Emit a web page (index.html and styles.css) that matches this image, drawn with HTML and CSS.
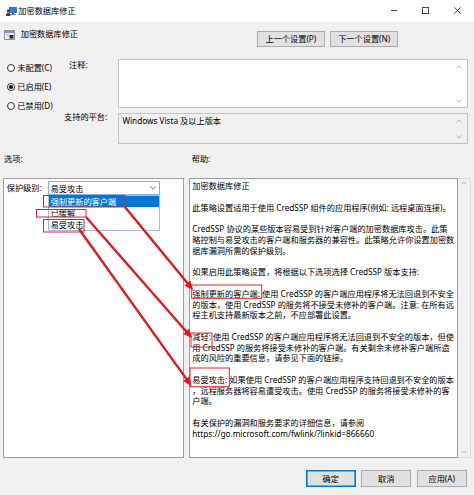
FILE: index.html
```html
<!DOCTYPE html>
<html lang="zh-CN">
<head>
<meta charset="utf-8">
<title>加密数据库修正</title>
<link rel="stylesheet" href="styles.css">
</head>
<body>
<div class="titlebar">
  <svg class="app-icon" viewBox="0 0 11 9" width="11" height="9">
    <rect x="3.3" y="0.4" width="7.3" height="5.4" fill="#2f7fd8" stroke="#1b4f98" stroke-width="0.6"/>
    <rect x="6" y="5.8" width="2" height="1.4" fill="#555"/>
    <rect x="4.6" y="7.2" width="4.8" height="0.9" fill="#555"/>
    <circle cx="2.2" cy="4" r="1.4" fill="#3c3c3c"/>
    <path d="M0 9 Q0 5.8 2.2 5.8 Q4.4 5.8 4.4 9z" fill="#3c3c3c"/>
  </svg>
  <span class="title">加密数据库修正</span>
  <div class="win-controls">
    <span class="wc"><svg width="6" height="1" viewBox="0 0 6 1"><rect width="6" height="0.8" fill="#222"/></svg></span>
    <span class="wc"><svg width="7" height="7" viewBox="0 0 7 7"><rect x="0.4" y="0.4" width="6.2" height="6.2" fill="none" stroke="#222" stroke-width="0.8"/></svg></span>
    <span class="wc"><svg width="7" height="7" viewBox="0 0 7 7"><path d="M0.3 0.3L6.7 6.7M6.7 0.3L0.3 6.7" stroke="#222" stroke-width="0.8"/></svg></span>
  </div>
</div>

<div class="header">
  <svg class="hdr-icon" viewBox="0 0 11 10" width="11" height="10">
    <rect x="0.5" y="0.5" width="10" height="9" fill="#ececec" stroke="#7a7a7a" stroke-width="0.8"/>
    <rect x="1" y="1" width="9" height="2" fill="#7d9cc0"/>
    <rect x="2" y="4.5" width="3" height="0.8" fill="#999"/>
    <rect x="5.5" y="5" width="4" height="3.6" fill="#2e2e2e"/>
  </svg>
  <span class="hdr-title">加密数据库修正</span>
  <div class="nav">
    <button class="btn nav-btn">上一个设置(P)</button>
    <button class="btn nav-btn">下一个设置(N)</button>
  </div>
</div>

<div class="config">
  <div class="radios">
    <div class="radio"><span class="radio-dot"></span><span>未配置(C)</span></div>
    <div class="radio"><span class="radio-dot checked"></span><span>已启用(E)</span></div>
    <div class="radio"><span class="radio-dot"></span><span>已禁用(D)</span></div>
  </div>
  <div class="lbl lbl-comment">注释:</div>
  <div class="box comment">
    <div class="box-body"></div>
    <div class="sb">
      <svg width="6" height="4" viewBox="0 0 6 4"><path d="M0.5 3.5L3 1L5.5 3.5" fill="none" stroke="#a8a8a8" stroke-width="0.8"/></svg>
      <svg width="6" height="4" viewBox="0 0 6 4"><path d="M0.5 0.5L3 3L5.5 0.5" fill="none" stroke="#a8a8a8" stroke-width="0.8"/></svg>
    </div>
  </div>
  <div class="lbl lbl-platform">支持的平台:</div>
  <div class="box platform">
    <div class="box-body">Windows Vista 及以上版本</div>
    <div class="sb">
      <svg width="6" height="4" viewBox="0 0 6 4"><path d="M0.5 3.5L3 1L5.5 3.5" fill="none" stroke="#a8a8a8" stroke-width="0.8"/></svg>
      <svg width="6" height="4" viewBox="0 0 6 4"><path d="M0.5 0.5L3 3L5.5 0.5" fill="none" stroke="#a8a8a8" stroke-width="0.8"/></svg>
    </div>
  </div>
</div>

<div class="lower">
  <div class="sec-label">选项:</div>
  <div class="sec-label help-label">帮助:</div>
  <div class="options-panel">
    <div class="opt-row">
      <span class="opt-label">保护级别:</span>
      <div class="combo">
        <span>易受攻击</span>
        <svg class="combo-arrow" width="6" height="4" viewBox="0 0 6 4"><path d="M0.5 0.5L3 3L5.5 0.5" fill="none" stroke="#555" stroke-width="0.8"/></svg>
        <div class="dropdown">
          <div class="dd-item sel">强制更新的客户端</div>
          <div class="dd-item">已缓解</div>
          <div class="dd-item">易受攻击</div>
        </div>
      </div>
    </div>
  </div>
  <div class="help-panel">
    <div class="help-text">
      <p>加密数据库修正</p>
      <p>此策略设置适用于使用 CredSSP 组件的应用程序(例如: 远程桌面连接)。</p>
      <p>CredSSP 协议的某些版本容易受到针对客户端的加密数据库攻击。此策<br>略控制与易受攻击的客户端和服务器的兼容性。此策略允许你设置加密数<br>据库漏洞所需的保护级别。</p>
      <p>如果启用此策略设置，将根据以下选项选择 CredSSP 版本支持:</p>
      <p>强制更新的客户端: 使用 CredSSP 的客户端应用程序将无法回退到不安全<br>的版本，使用 CredSSP 的服务将不接受未修补的客户端。注意: 在所有远<br>程主机支持最新版本之前，不应部署此设置。</p>
      <p>减轻: 使用 CredSSP 的客户端应用程序将无法回退到不安全的版本，但使<br>用 CredSSP 的服务将接受未修补的客户端。有关剩余未修补客户端所造<br>成的风险的重要信息，请参见下面的链接。</p>
      <p>易受攻击: 如果使用 CredSSP 的客户端应用程序支持回退到不安全的版本<br>，远程服务器将容易遭受攻击。使用 CredSSP 的服务将接受未修补的客<br>户端。</p>
      <p>有关保护的漏洞和服务要求的详细信息，请参阅<br>https://go.microsoft.com/fwlink/?linkid=866660</p>
    </div>
    <div class="help-sb">
      <svg width="6" height="4" viewBox="0 0 6 4"><path d="M0.5 3.5L3 1L5.5 3.5" fill="none" stroke="#a8a8a8" stroke-width="0.8"/></svg>
      <svg width="6" height="4" viewBox="0 0 6 4"><path d="M0.5 0.5L3 3L5.5 0.5" fill="none" stroke="#a8a8a8" stroke-width="0.8"/></svg>
    </div>
  </div>
</div>

<div class="footer">
  <button class="btn fbtn btn-ok">确定</button>
  <button class="btn fbtn">取消</button>
  <button class="btn fbtn">应用(A)</button>
</div>

<svg class="annot" width="474" height="495" viewBox="0 0 474 495">
  <defs>
    <marker id="ah" markerWidth="10" markerHeight="8" refX="2" refY="4" orient="auto" markerUnits="userSpaceOnUse">
      <path d="M0,0 L9,4 L0,8 z" fill="#e5141c"/>
    </marker>
  </defs>
  <g fill="none" stroke="#e2242b" stroke-width="1">
    <rect x="43.5" y="195.5" width="81.5" height="11.5"/>
    <rect x="36.5" y="209.5" width="49.5" height="7.5"/>
    <rect x="43.5" y="219.5" width="40.5" height="12.5"/>
    <rect x="191.7" y="285" width="70" height="13.3"/>
    <rect x="191" y="333" width="21" height="14"/>
    <rect x="190" y="368" width="39.3" height="18.7"/>
  </g>
  <g stroke="#e5141c" stroke-width="2.3" marker-end="url(#ah)">
    <line x1="125" y1="207" x2="188.6" y2="284.6"/>
    <line x1="86" y1="217" x2="187.4" y2="332.7"/>
    <line x1="79" y1="229" x2="187.4" y2="380.3"/>
  </g>
</svg>
</body>
</html>
```
FILE: styles.css
```css
* { box-sizing: border-box; }

body {
  margin: 0;
  width: 474px;
  height: 495px;
  overflow: hidden;
  background: #f0f0f0;
  font-family: "Noto Sans", "Noto Sans CJK SC", sans-serif;
  font-size: 8.2px;
  color: #000;
  position: relative;
}

/* title bar */
.titlebar {
  height: 22px;
  background: #fff;
  display: flex;
  align-items: center;
}
.app-icon { margin-left: 6px; flex: none; }
.title { margin-left: 1.3px; line-height: 12px; }
.win-controls {
  margin-left: auto;
  margin-right: 1px;
  display: flex;
  align-self: stretch;
}
.wc {
  width: 31.5px;
  display: flex;
  align-items: center;
  justify-content: center;
  padding-bottom: 2px;
}

/* header */
.header {
  height: 30px;
  display: flex;
  align-items: flex-start;
}
.hdr-icon { margin-left: 4px; margin-top: 8px; flex: none; }
.hdr-title { margin-left: 5.7px; margin-top: 6.3px; line-height: 12px; }
.nav {
  margin-left: auto;
  margin-right: 75.7px;
  margin-top: 8.7px;
  display: flex;
  gap: 5px;
}
.btn {
  background: #e1e1e1;
  border: 1px solid #adadad;
  font: inherit;
  color: #000;
  padding: 0;
  margin: 0;
  text-align: center;
}
.nav-btn { width: 68.3px; height: 16px; line-height: 14px; }

/* config area */
.config {
  display: grid;
  grid-template-columns: 64px 54px 350px;
  grid-template-rows: 49.3px 31px;
  row-gap: 5px;
  margin-top: 7px;
}
.radios {
  grid-row: 1 / 3;
  grid-column: 1;
  display: flex;
  flex-direction: column;
  gap: 7.2px;
  padding-top: 2.7px;
  padding-left: 6.7px;
}
.radio { display: flex; align-items: center; height: 12px; line-height: 12px; }
.radio-dot {
  width: 8.3px;
  height: 8.3px;
  border: 1px solid #333;
  border-radius: 50%;
  margin-right: 2.3px;
  background: #fff;
  display: flex;
  align-items: center;
  justify-content: center;
  flex: none;
}
.radio-dot.checked::after {
  content: "";
  width: 3.6px;
  height: 3.6px;
  border-radius: 50%;
  background: #1a1a1a;
}
.lbl-comment { grid-column: 2; grid-row: 1; padding-left: 5px; line-height: 12px; }
.lbl-platform { grid-column: 2; grid-row: 2; line-height: 8px; }
.box { border: 1px solid #c4c4c4; display: flex; }
.comment { grid-column: 3; grid-row: 1; background: #fff; }
.platform { grid-column: 3; grid-row: 2; background: #f0f0f0; }
.box-body { flex: 1; padding-left: 3.4px; padding-top: 0.4px; line-height: 12px; }
.sb {
  width: 16px;
  display: flex;
  flex-direction: column;
  justify-content: space-between;
  align-items: center;
  padding: 4.5px 0;
}

/* lower area */
.lower {
  display: grid;
  grid-template-columns: 181px 282px;
  grid-template-rows: 33.7px 280px;
  column-gap: 5px;
  padding-left: 3px;
}
.sec-label { padding-top: 8.7px; padding-left: 1px; line-height: 12px; }
.help-label { padding-left: 2.7px; }

.options-panel {
  background: #fff;
  border: 1px solid #a0a0a0;
  padding: 2px 0 0 2.7px;
}
.opt-row { display: flex; align-items: center; }
.opt-label { width: 41.6px; flex: none; line-height: 12px; padding-top: 1px; }
.combo {
  position: relative;
  width: 111.7px;
  height: 14px;
  border: 1px solid #85b2e2;
  background: #fff;
  display: flex;
  align-items: center;
  padding-left: 1.4px;
}
.combo-arrow { margin-left: auto; margin-right: 3px; }
.dropdown {
  position: absolute;
  top: 13px;
  left: -1px;
  width: 111.7px;
  background: #fff;
  border: 1px solid #a9bdd6;
}
.dd-item { height: 11.5px; line-height: 11.5px; padding-left: 1.4px; white-space: nowrap; }
.dd-item.sel { background: #0078d7; color: #fff; }

.help-panel { display: flex; }
.help-text {
  width: 269px;
  background: #fff;
  border: 1px solid #a0a0a0;
  padding: 2.3px 0 0 2.3px;
  line-height: 10.75px;
  white-space: nowrap;
  overflow: hidden;
}
.help-text p { margin: 0 0 10.75px; }
.help-sb {
  flex: 1;
  display: flex;
  flex-direction: column;
  justify-content: space-between;
  align-items: center;
  padding: 2.5px 0;
  border: 1px solid #dcdcdc;
  border-left: none;
}

/* footer */
.footer {
  display: flex;
  justify-content: flex-end;
  gap: 5.5px;
  padding-right: 7.3px;
  margin-top: 12px;
}
.fbtn { width: 50px; height: 17px; line-height: 15px; }
.btn-ok { border-color: #0078d7; box-shadow: inset 0 0 0 0.6px #0078d7; }

/* annotations overlay */
.annot {
  position: absolute;
  top: 0;
  left: 0;
  pointer-events: none;
}
```
